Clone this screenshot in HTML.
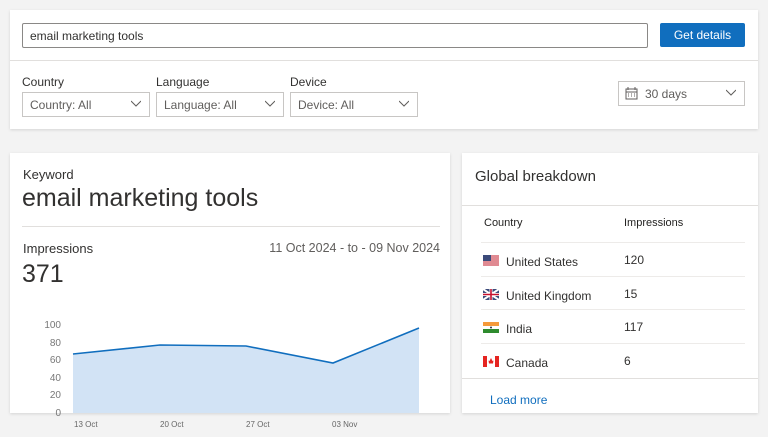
<!DOCTYPE html>
<html><head><meta charset="utf-8"><style>
*{box-sizing:border-box;margin:0;padding:0}
body{width:768px;height:437px;background:#f3f3f3;font-family:"Liberation Sans",sans-serif;color:#323130;position:relative;overflow:hidden}
.abs{position:absolute}
.card{position:absolute;background:#fff;box-shadow:0 1px 3px rgba(0,0,0,.13)}
.inp{border:1px solid #8a8886;border-radius:2px;font-size:12px;padding-left:7px;display:flex;align-items:center;background:#fff}
.sel{border:1px solid #c8c6c4;font-size:12px;color:#605e5c;padding-left:7px;display:flex;align-items:center;background:#fff}
.chev{position:absolute;right:8px;top:7px}
.lbl{font-size:12px;color:#323130}
.row{position:absolute;left:481px;width:264px;border-bottom:1px solid #edebe9;font-size:12px}
</style></head><body>
<div class="card" style="left:10px;top:10px;width:748px;height:119px"></div>
<div class="abs inp" style="left:22px;top:23px;width:626px;height:25px">email marketing tools</div>
<div class="abs" style="left:660px;top:23px;width:85px;height:24px;background:#106ebe;color:#fff;font-size:12px;display:flex;align-items:center;justify-content:center;border-radius:2px">Get details</div>
<div class="abs" style="left:10px;top:60px;width:748px;border-top:1px solid #e1dfdd"></div>
<div class="abs lbl" style="left:22px;top:75px">Country</div>
<div class="abs lbl" style="left:156px;top:75px">Language</div>
<div class="abs lbl" style="left:290px;top:75px">Device</div>
<div class="abs sel" style="left:22px;top:92px;width:128px;height:25px">Country: All<svg class="chev" width="10" height="8"><path d="M0 1l5 5 5-5" fill="none" stroke="#605e5c"/></svg></div>
<div class="abs sel" style="left:156px;top:92px;width:128px;height:25px">Language: All<svg class="chev" width="10" height="8"><path d="M0 1l5 5 5-5" fill="none" stroke="#605e5c"/></svg></div>
<div class="abs sel" style="left:290px;top:92px;width:128px;height:25px">Device: All<svg class="chev" width="10" height="8"><path d="M0 1l5 5 5-5" fill="none" stroke="#605e5c"/></svg></div>
<div class="abs sel" style="left:618px;top:81px;width:127px;height:25px;padding-left:6px"><svg width="13" height="13" style="margin-right:7px"><rect x="1" y="2" width="11" height="10" fill="none" stroke="#605e5c"/><path d="M1 5h11M3 0v3M10 0v3M3 7h1M6 7h1M9 7h1M3 9h1M6 9h1M9 9h1" stroke="#605e5c"/></svg>30 days<svg class="chev" width="10" height="8"><path d="M0 1l5 5 5-5" fill="none" stroke="#605e5c"/></svg></div>

<div class="card" style="left:10px;top:153px;width:440px;height:260px"></div>
<div class="abs" style="left:23px;top:167px;font-size:13px">Keyword</div>
<div class="abs" style="left:22px;top:184px;font-size:25px">email marketing tools</div>
<div class="abs" style="left:22px;top:226px;width:418px;border-top:1px solid #e1dfdd"></div>
<div class="abs" style="left:23px;top:241px;font-size:13px">Impressions</div>
<div class="abs" style="left:240px;top:241px;font-size:12.5px;color:#605e5c;width:200px;text-align:right;white-space:nowrap">11 Oct 2024 - to - 09 Nov 2024</div>
<div class="abs" style="left:22px;top:260px;font-size:25px">371</div>
<svg class="abs" style="left:0;top:310px" width="450" height="127">
<g font-family="Liberation Sans" font-size="10" fill="#777" text-anchor="end">
<text x="61" y="18">100</text><text x="61" y="36">80</text><text x="61" y="53">60</text><text x="61" y="71">40</text><text x="61" y="88">20</text><text x="61" y="106">0</text></g>
<path d="M73 44L160 35L246 36L333 53L419 18V103H73Z" fill="#d2e3f5"/>
<path d="M73 44L160 35L246 36L333 53L419 18" fill="none" stroke="#106ebe" stroke-width="1.6"/>
<g font-family="Liberation Sans" font-size="8" fill="#666"><text x="74" y="117">13 Oct</text><text x="160" y="117">20 Oct</text><text x="246" y="117">27 Oct</text><text x="332" y="117">03 Nov</text></g>
</svg>

<div class="card" style="left:462px;top:153px;width:296px;height:260px"></div>
<div class="abs" style="left:475px;top:168px;font-size:15px">Global breakdown</div>
<div class="abs" style="left:462px;top:205px;width:296px;border-top:1px solid #e1dfdd"></div>
<div class="row" style="top:205px;height:38px;font-size:11px;color:#201f1e"><span class="abs" style="left:3px;top:12px">Country</span><span class="abs" style="left:143px;top:12px">Impressions</span></div>
<div class="row" style="top:243px;height:34px"><svg class="abs" style="left:2px;top:12px" width="16" height="11"><rect width="16" height="11" fill="#e08a92"/><rect width="8" height="6" fill="#3b4a7a"/></svg><span class="abs" style="left:25px;top:12px">United States</span><span class="abs" style="left:143px;top:10px">120</span></div>
<div class="row" style="top:277px;height:33px"><svg class="abs" style="left:2px;top:12px" width="16" height="11"><rect width="16" height="11" fill="#3b4a7a"/><path d="M0 0L16 11M16 0L0 11" stroke="#fff" stroke-width="2"/><path d="M8 0V11M0 5.5H16" stroke="#fff" stroke-width="3"/><path d="M8 0V11M0 5.5H16" stroke="#c8102e" stroke-width="1.6"/></svg><span class="abs" style="left:25px;top:12px">United Kingdom</span><span class="abs" style="left:143px;top:10px">15</span></div>
<div class="row" style="top:310px;height:34px"><svg class="abs" style="left:2px;top:12px" width="16" height="11"><rect width="16" height="4" fill="#f59a3a"/><rect y="4" width="16" height="3" fill="#fff"/><rect y="7" width="16" height="4" fill="#2e8b2e"/><circle cx="8" cy="5.5" r="1" fill="#334"/></svg><span class="abs" style="left:25px;top:12px">India</span><span class="abs" style="left:143px;top:10px">117</span></div>
<div class="row" style="top:344px;height:34px;border:none"><svg class="abs" style="left:2px;top:12px" width="16" height="11"><rect width="16" height="11" fill="#fff"/><rect width="4" height="11" fill="#e52421"/><rect x="12" width="4" height="11" fill="#e52421"/><path d="M8 2l1.5 3 1-.5-.5 3H6l-.5-3 1 .5z" fill="#e52421"/></svg><span class="abs" style="left:25px;top:12px">Canada</span><span class="abs" style="left:143px;top:10px">6</span></div>
<div class="abs" style="left:462px;top:378px;width:296px;border-top:1px solid #e1dfdd"></div>
<div class="abs" style="left:490px;top:393px;font-size:12px;color:#106ebe">Load more</div>
</body></html>
